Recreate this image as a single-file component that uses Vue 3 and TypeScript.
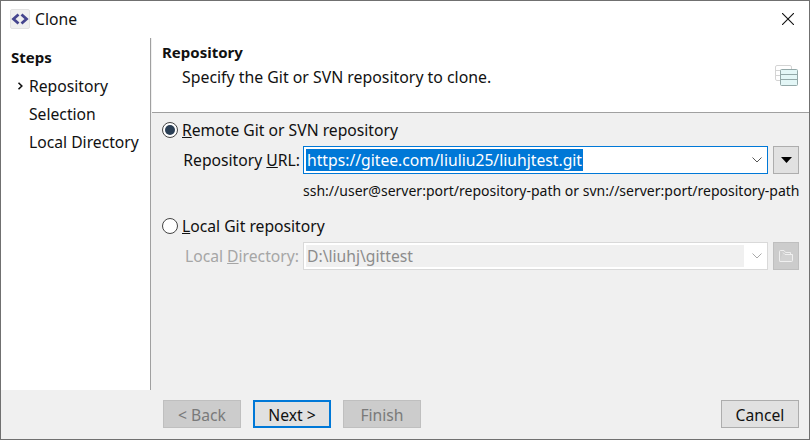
<script setup lang="ts">
const steps = ['Repository', 'Selection', 'Local Directory']
</script>

<template>
  <div class="window">
    <div class="titlebar">
      <div class="app-icon">
        <svg width="20" height="20" viewBox="0 0 20 20">
          <path d="M8.500 5.500 L3.500 10 L8.500 14.500 M11.500 5.500 L16.500 10 L11.500 14.500" fill="none" stroke="#45458f" stroke-width="2.800" />
        </svg>
      </div>
      <span class="title">Clone</span>
      <svg class="close" width="12" height="12" viewBox="0 0 12 12">
        <path d="M0 0 L12 12 M12 0 L0 12" stroke="#111" stroke-width="1.100" />
      </svg>
    </div>

    <div class="main">
      <aside class="sidebar">
        <div class="steps-title">Steps</div>
        <div v-for="(step, i) in steps" :key="step" class="step">
          <span class="marker">
            <svg v-if="i === 0" width="7" height="8" viewBox="0 0 7 8">
              <path d="M1.500 0.800 L4.800 4 L1.500 7.200" fill="none" stroke="#111" stroke-width="1.600" />
            </svg>
          </span>
          {{ step }}
        </div>
      </aside>

      <div class="content">
        <header class="header">
          <div class="header-text">
            <div class="header-title">Repository</div>
            <div class="header-desc">Specify the Git or SVN repository to clone.</div>
          </div>
          <svg class="header-icon" width="23" height="21" viewBox="0 0 23 21">
            <rect x="0.500" y="0.500" width="16" height="15" rx="1.500" fill="#fff" stroke="#d4d4d4" />
            <path d="M0.500 5.500 H16.500 M0.500 10.500 H16.500" stroke="#d4d4d4" />
            <rect x="5.500" y="4.500" width="17" height="16" rx="1" fill="#e3f6f6" stroke="#93a8a8" />
            <path d="M5.500 9.500 H22.500 M5.500 14.500 H22.500" stroke="#93a8a8" />
          </svg>
        </header>

        <section class="form">
          <label class="radio-row">
            <span class="radio checked"><span class="dot"></span></span>
            <span><u>R</u>emote Git or SVN repository</span>
          </label>
          <div class="field-row">
            <span class="field-label"><span>Repository <u>U</u>RL:</span></span>
            <div class="combo active">
              <span class="selected">https://gitee.com/liuliu25/liuhjtest.git</span>
              <svg class="chevron" width="10" height="6" viewBox="0 0 10 6">
                <path d="M0.500 0.500 L5 5 L9.500 0.500" fill="none" stroke="#555" />
              </svg>
            </div>
            <button class="side-btn">
              <svg width="11" height="6" viewBox="0 0 11 6"><path d="M0 0 H11 L5.500 6 Z" fill="#000" /></svg>
            </button>
          </div>
          <div class="hint">ssh://user@server:port/repository-path or svn://server:port/repository-path</div>

          <label class="radio-row second">
            <span class="radio"></span>
            <span><u>L</u>ocal Git repository</span>
          </label>
          <div class="field-row disabled">
            <span class="field-label"><span>Local <u>D</u>irectory:</span></span>
            <div class="combo">
              <span class="readonly">D:\liuhj\gittest</span>
              <svg class="chevron" width="10" height="6" viewBox="0 0 10 6">
                <path d="M0.500 0.500 L5 5 L9.500 0.500" fill="none" stroke="#aaa" />
              </svg>
            </div>
            <button class="side-btn off">
              <svg width="14" height="12" viewBox="0 0 14 12">
                <path d="M0.500 11 V1.500 Q0.500 0.500 1.500 0.500 H5 L6.500 2.500 H11.500 V4" fill="none" stroke="#eeeeee" />
                <path d="M0.500 11.500 H12.500 Q13.500 11.500 13.500 10.500 V4.500 H6 L4 2.500" fill="#d2d2d2" stroke="#f0f0f0" />
              </svg>
            </button>
          </div>
        </section>
      </div>
    </div>

    <footer class="footer">
      <div class="nav-buttons">
        <button class="btn off">&lt; Back</button>
        <button class="btn default">Next &gt;</button>
        <button class="btn off">Finish</button>
      </div>
      <button class="btn">Cancel</button>
    </footer>
  </div>
</template>

<style>
html, body {
  margin: 0;
  background: #f0f0f0;
}
</style>

<style scoped>
.window {
  box-sizing: border-box;
  width: 810px;
  height: 440px;
  display: flex;
  flex-direction: column;
  border: 1px solid #707070;
  background: #f0f0f0;
  color: #111;
  font-family: "Noto Sans", "Noto Sans CJK SC", sans-serif;
  font-size: 15.7px;
  overflow: hidden;
}
.titlebar {
  box-sizing: border-box;
  height: 37px;
  flex: none;
  display: flex;
  align-items: center;
  background: #fff;
  padding: 0 15px 2px 9px;
}
.app-icon {
  box-sizing: border-box;
  width: 20px;
  height: 20px;
  background: #efefef;
  border: 1px solid #e2e2e2;
  border-radius: 2px;
  margin-right: 5px;
}
.app-icon svg {
  display: block;
  margin: -1px;
}
.title {
  flex: 1;
  line-height: 20px;
}
.main {
  height: 352px;
  flex: none;
  display: flex;
  background: #fff;
}
.sidebar {
  box-sizing: border-box;
  width: 150px;
  flex: none;
  height: 353px;
  background: #fff;
  border-right: 1px solid #a0a0a0;
  border-bottom: 1px solid #a0a0a0;
  padding: 8px 0 0 10px;
}
.steps-title {
  font-size: 15px;
  font-weight: 700;
  line-height: 22px;
  margin-bottom: 4px;
}
.step {
  display: flex;
  align-items: center;
  height: 28px;
}
.marker {
  width: 18px;
  flex: none;
  display: flex;
  padding-left: 6px;
  box-sizing: border-box;
}
.content {
  flex: 1;
  display: flex;
  flex-direction: column;
  background: #f0f0f0;
  min-width: 0;
}
.header {
  box-sizing: border-box;
  height: 75px;
  flex: none;
  display: flex;
  justify-content: space-between;
  align-items: flex-start;
  background: #fff;
  border-bottom: 1px solid #a0a0a0;
  padding: 3px 11px 0 10px;
  margin-left: 1px;
}
.header-title {
  font-size: 15px;
  font-weight: 700;
  line-height: 22px;
}
.header-desc {
  margin: 3px 0 0 20px;
  font-size: 15.85px;
  line-height: 22px;
}
.header-icon {
  margin-top: 24px;
}
.form {
  padding: 6px 9px 0 10px;
}
.radio-row {
  display: flex;
  align-items: center;
  height: 22px;
  gap: 4px;
}
.radio-row.second {
  margin-top: 14px;
}
.radio {
  box-sizing: border-box;
  width: 16px;
  height: 16px;
  margin-left: 1px;
  border: 1px solid #444;
  border-radius: 50%;
  background: #fff;
  display: flex;
  align-items: center;
  justify-content: center;
}
.dot {
  width: 10px;
  height: 10px;
  border-radius: 50%;
  background: #2b3f55;
}
.field-row {
  display: flex;
  align-items: center;
  margin-top: 5px;
}
.field-row.disabled {
  color: #a6a6a6;
}
.field-label {
  width: 142px;
  flex: none;
  display: flex;
  justify-content: flex-end;
  box-sizing: border-box;
  padding-right: 3px;
  white-space: nowrap;
}
.field-row.disabled .field-label {
  padding-right: 4px;
}
.combo {
  box-sizing: border-box;
  width: 465px;
  height: 28px;
  flex: none;
  display: flex;
  align-items: center;
  justify-content: space-between;
  background: #fff;
  border: 1px solid #d9d9d9;
  padding: 2px 5px 2px 2px;
}
.combo.active {
  border-color: #0078d7;
}
.selected {
  background: #0078d7;
  color: #fff;
  line-height: 22px;
  padding: 0 1px;
}
.readonly {
  width: 438px;
  box-sizing: border-box;
  background: #f0f0f0;
  color: #8c8c8c;
  line-height: 22px;
  padding-left: 1px;
}
.side-btn {
  box-sizing: border-box;
  width: 26px;
  height: 28px;
  margin-left: 5px;
  padding: 0;
  display: flex;
  align-items: center;
  justify-content: center;
  background: #e1e1e1;
  border: 1px solid #adadad;
}
.side-btn.off {
  background: #cccccc;
  border-color: #bfbfbf;
}
.hint {
  margin: 7px 0 0 142px;
  font-size: 14.03px;
  line-height: 20px;
  white-space: nowrap;
}
.footer {
  flex: 1;
  display: flex;
  justify-content: space-between;
  align-items: flex-start;
  padding: 10px 10px 0 162px;
  background: #f0f0f0;
}
.nav-buttons {
  display: flex;
  gap: 12px;
}
.btn {
  box-sizing: border-box;
  width: 78px;
  height: 28px;
  padding: 2px 0 0;
  font: inherit;
  color: #111;
  background: #e1e1e1;
  border: 1px solid #adadad;
}
.btn.off {
  background: #cccccc;
  border-color: #bfbfbf;
  color: #7a7a7a;
}
.btn.default {
  border: 2px solid #0078d7;
}
</style>
